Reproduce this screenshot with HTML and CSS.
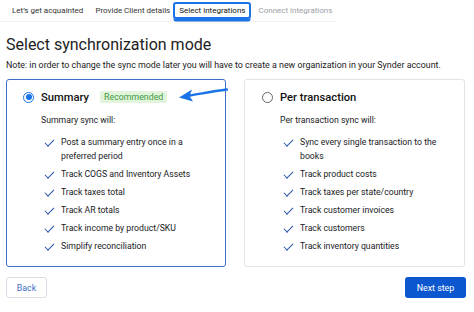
FILE: index.html
```html
<!DOCTYPE html>
<html lang="en">
<head>
  <meta charset="UTF-8">
  <meta name="viewport" content="width=device-width, initial-scale=1.0">
  <title>Select synchronization mode</title>
  <link rel="stylesheet" href="styles.css">
</head>
<body>

  <!-- Pasos del asistente -->
  <nav class="steps">
    <span class="step">Let’s get acquainted</span>
    <span class="step">Provide Client details</span>
    <span class="step active">Select integrations</span>
    <span class="step muted">Connect integrations</span>
  </nav>

  <main class="page">
    <h1 class="title">Select synchronization mode</h1>
    <p class="note">Note: in order to change the sync mode later you will have to create a new organization in your Synder account.</p>

    <div class="modes">
      <div class="mode selected">
        <div class="mode-head">
          <span class="radio checked"></span>
          <span class="mode-name">Summary</span>
          <span class="badge">Recommended</span>
        </div>
        <svg class="arrow" width="50" height="14" viewBox="0 0 50 14">
          <path d="M49 1.5 C36 3 24 5.5 12 7.5" fill="none" stroke="#1a73e8" stroke-width="2.4" stroke-linecap="round"/>
          <path d="M1 9.5 L14 1.5 L11.5 8 L15 13.5 Z" fill="#1a73e8"/>
        </svg>
        <p class="mode-sub">Summary sync will:</p>
        <ul class="checks">
          <li>Post a summary entry once in a preferred period</li>
          <li>Track COGS and Inventory Assets</li>
          <li>Track taxes total</li>
          <li>Track AR totals</li>
          <li>Track income by product/SKU</li>
          <li>Simplify reconciliation</li>
        </ul>
      </div>

      <div class="mode">
        <div class="mode-head">
          <span class="radio"></span>
          <span class="mode-name">Per transaction</span>
        </div>
        <p class="mode-sub">Per transaction sync will:</p>
        <ul class="checks">
          <li>Sync every single transaction to the books</li>
          <li>Track product costs</li>
          <li>Track taxes per state/country</li>
          <li>Track customer invoices</li>
          <li>Track customers</li>
          <li>Track inventory quantities</li>
        </ul>
      </div>
    </div>

    <div class="actions">
      <button class="btn btn-back">Back</button>
      <button class="btn btn-next">Next step</button>
    </div>
  </main>

</body>
</html>
```

FILE: styles.css
```css
/* Estilos generales */
body {
  margin: 0;
  font-family: Roboto, "Liberation Sans", sans-serif;
  color: #202124;
  background: #fff;
}

/* Pasos */
.steps {
  display: flex;
  align-items: center;
  height: 21px;
  width: 336px;
  border-bottom: 1px solid #f0f0f0;
  font-size: 8px;
  color: #333;
  white-space: nowrap;
}

.step {
  padding: 0 6px;
}

.step:first-child {
  margin-left: 6px;
}

.step.active {
  margin-left: -3px;
  padding: 2px 4px;
  border: 2px solid #1a73e8;
  border-radius: 3px;
  box-shadow: 0 3px 0 -0.5px #1a73e8;
  color: #111;
}

.step.muted {
  color: #9aa0a6;
  margin-left: 1px;
}

/* Contenido */
.page {
  padding: 0 9px 0 6px;
}

.title {
  margin: 11px 0 0;
  font-size: 16px;
  line-height: 24px;
  font-weight: 400;
  color: #222;
}

.note {
  margin: 1px 0 0;
  font-size: 8.9px;
  line-height: 14px;
  color: #222;
  white-space: nowrap;
}

.modes {
  display: flex;
  gap: 18px;
  margin-top: 7px;
}

.mode {
  position: relative;
  flex: 1;
  height: 188px;
  box-sizing: border-box;
  padding: 7px 10px 0 17px;
  border: 1px solid #e3e3e3;
  border-radius: 3px;
}

.mode.selected {
  border: 1.5px solid #3f6fc6;
  padding-left: 16px;
}

.mode-head {
  display: flex;
  align-items: center;
  height: 20px;
}

.radio {
  width: 9px;
  height: 9px;
  border: 1.5px solid #666;
  border-radius: 50%;
  margin-right: 7px;
  position: relative;
}

.radio.checked {
  border-color: #1a73e8;
}

.radio.checked::after {
  content: "";
  position: absolute;
  top: 1.5px;
  left: 1.5px;
  width: 6px;
  height: 6px;
  border-radius: 50%;
  background: #1a73e8;
}

.mode-name {
  font-size: 11.2px;
  font-weight: 500;
  color: #111;
}

.badge {
  margin-left: 11px;
  padding: 1px 4px;
  font-size: 8.8px;
  color: #3c9a3c;
  background: #e2f4dc;
  border-radius: 2px;
}

.arrow {
  position: absolute;
  top: 8px;
  left: 171px;
}

.mode-sub {
  margin: 6px 0 0 18px;
  font-size: 8.7px;
  line-height: 14px;
}

.checks {
  list-style: none;
  margin: 8px 0 0 20px;
  padding: 0;
}

.checks li {
  position: relative;
  padding-left: 18px;
  margin-bottom: 4px;
  font-size: 8.7px;
  line-height: 14px;
}

.checks li::before {
  content: "";
  position: absolute;
  left: 4px;
  top: 2px;
  width: 3.5px;
  height: 8px;
  border-right: 1.3px solid #2a55a8;
  border-bottom: 1.3px solid #2a55a8;
  transform: rotate(45deg);
}

/* Botones */
.actions {
  display: flex;
  justify-content: space-between;
  margin-top: 10px;
}

.btn {
  height: 21px;
  font-family: inherit;
  font-size: 8.8px;
  border-radius: 3px;
  cursor: pointer;
}

.btn-back {
  width: 41px;
  background: #fff;
  color: #3f6fc6;
  border: 1px solid #d8dde6;
}

.btn-next {
  width: 61px;
  margin-right: -1px;
  background: #0b57d0;
  color: #fff;
  border: none;
}
```
